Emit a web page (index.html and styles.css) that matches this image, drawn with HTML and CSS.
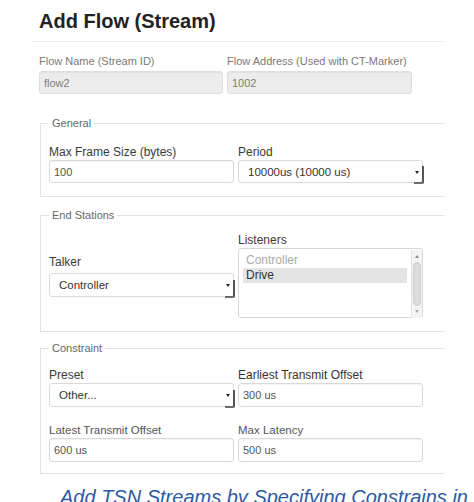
FILE: index.html
```html
<!DOCTYPE html>
<html lang="en">
<head>
<meta charset="utf-8">
<title>Add Flow (Stream)</title>
<link rel="stylesheet" href="styles.css">
</head>
<body>
<div class="page">
  <h1 class="title">Add Flow (Stream)</h1>
  <hr class="rule">
  <div class="row row-top">
    <div class="field">
      <div class="lbl lbl-muted">Flow Name (Stream ID)</div>
      <div class="input input-disabled">flow2</div>
    </div>
    <div class="field">
      <div class="lbl lbl-muted">Flow Address (Used with CT-Marker)</div>
      <div class="input input-disabled">1002</div>
    </div>
  </div>

  <fieldset class="group group-general">
    <legend class="legend">General</legend>
    <div class="grid grid-general">
      <div class="field">
        <div class="lbl">Max Frame Size (bytes)</div>
        <div class="input">100</div>
      </div>
      <div class="field">
        <div class="lbl">Period</div>
        <div class="select select-period"><span class="select-text">10000us (10000 us)</span><i class="caret"></i></div>
      </div>
    </div>
  </fieldset>

  <fieldset class="group group-stations">
    <legend class="legend">End Stations</legend>
    <div class="grid grid-stations">
      <div class="field field-talker">
        <div class="lbl lbl-talker">Talker</div>
        <div class="select"><span class="select-text">Controller</span><i class="caret"></i></div>
      </div>
      <div class="field">
        <div class="lbl">Listeners</div>
        <div class="listbox">
          <div class="options">
            <div class="option option-off">Controller</div>
            <div class="option option-selected">Drive</div>
          </div>
          <div class="scrollbar">
            <div class="sb-btn"><i class="sb-up"></i></div>
            <div class="sb-thumb"></div>
            <div class="sb-btn"><i class="sb-down"></i></div>
          </div>
        </div>
      </div>
    </div>
  </fieldset>

  <fieldset class="group group-constraint">
    <legend class="legend">Constraint</legend>
    <div class="grid grid-constraint">
      <div class="field">
        <div class="lbl">Preset</div>
        <div class="select select-tall"><span class="select-text">Other...</span><i class="caret"></i></div>
      </div>
      <div class="field">
        <div class="lbl lbl-strong">Earliest Transmit Offset</div>
        <div class="input input-tall">300 us</div>
      </div>
      <div class="field">
        <div class="lbl lbl-soft">Latest Transmit Offset</div>
        <div class="input input-tall">600 us</div>
      </div>
      <div class="field">
        <div class="lbl lbl-soft">Max Latency</div>
        <div class="input input-tall">500 us</div>
      </div>
    </div>
  </fieldset>
</div>
<p class="caption">Add TSN Streams by Specifying Constrains in</p>
</body>
</html>
```

FILE: styles.css
```css
html, body {
  margin: 0;
  padding: 0;
  background: #ffffff;
}

body {
  font-family: "Liberation Sans", Arial, Helvetica, sans-serif;
  color: #333;
  width: 474px;
  height: 502px;
  overflow: hidden;
}

.page {
  margin-left: 32px;
  width: 413px;
}

.title {
  margin: 0;
  padding: 9px 0 0 7px;
  font-size: 20px;
  line-height: 24px;
  font-weight: bold;
  color: #222;
}

.rule {
  margin: 8px 0 0 0;
  border: 0;
  height: 1px;
  background: #eeeeee;
}

.row-top {
  display: grid;
  grid-template-columns: 184px 185px;
  column-gap: 4px;
  margin: 13px 0 0 7px;
}

.field {
  display: flex;
  flex-direction: column;
  min-width: 0;
}

.lbl {
  font-size: 12px;
  line-height: 14px;
  margin-bottom: 1px;
  color: #3a3a3a;
  white-space: nowrap;
}

.lbl-muted {
  font-size: 11px;
  line-height: 13px;
  margin-bottom: 3px;
  color: #7a7a7a;
}

.lbl-strong {
  color: #333;
}

.lbl-soft {
  font-size: 11.5px;
  color: #555;
}

.input {
  box-sizing: border-box;
  height: 23px;
  border: 1px solid #d9d9d9;
  border-radius: 3px;
  background: #fff;
  box-shadow: inset 0 1px 1px rgba(0, 0, 0, 0.05);
  padding: 0 4px;
  display: flex;
  align-items: center;
  font-size: 11px;
  color: #555;
  white-space: nowrap;
}

.input-disabled {
  background: #ececec;
  border-color: #dedede;
  color: #7d7d7d;
}

.input-tall {
  height: 24px;
}

.select {
  position: relative;
  box-sizing: border-box;
  height: 24px;
  border: 1px solid #dadada;
  border-radius: 3px;
  background: #fff;
  padding: 0 9px;
  display: flex;
  align-items: center;
  font-size: 11.5px;
  color: #333;
  white-space: nowrap;
}

.select-period {
  height: 23px;
}

.select-text {
  flex: 1;
}

.caret {
  position: absolute;
  right: 3px;
  top: 50%;
  margin-top: -1px;
  width: 0;
  height: 0;
  border-left: 2px solid transparent;
  border-right: 2px solid transparent;
  border-top: 3px solid #222;
}

.select::after {
  content: "";
  position: absolute;
  right: -2px;
  bottom: -2px;
  width: 8px;
  height: 16px;
  border-right: 2px solid #3a3a3a;
  border-bottom: 2px solid #555;
  border-bottom-right-radius: 2px;
  opacity: 0.85;
}

.group {
  margin: 0 0 0 8px;
  padding: 0 21px 13px 8px;
  border: 1px solid #e3e3e3;
  border-right-color: transparent;
  min-width: 0;
}

.legend {
  padding: 0 3px;
  font-size: 11px;
  line-height: 13px;
  color: #666;
}

.group-general {
  margin-top: 23px;
}

.group-stations {
  margin-top: 12px;
}

.group-constraint {
  margin-top: 10px;
  padding-bottom: 11px;
}

.grid {
  display: grid;
  grid-template-columns: 185px 185px;
  column-gap: 4px;
}

.grid-general {
  margin-top: 15px;
}

.grid-stations {
  margin-top: 11px;
  align-items: start;
}

.grid-constraint {
  margin-top: 13px;
  row-gap: 16px;
}

.field-talker {
  margin-top: 22px;
}

.lbl-talker {
  margin-bottom: 4px;
}

.listbox {
  box-sizing: border-box;
  height: 70px;
  border: 1px solid #d6d6d6;
  border-radius: 3px;
  background: #fff;
  display: flex;
  padding: 4px 0 0 4px;
}

.options {
  flex: 1;
  display: flex;
  flex-direction: column;
}

.option {
  height: 15px;
  line-height: 15px;
  padding-left: 3px;
  font-size: 12px;
  color: #333;
}

.option-off {
  color: #ababab;
}

.option-selected {
  background: #e4e4e4;
}

.scrollbar {
  box-sizing: border-box;
  width: 11px;
  margin: -3px 0 0 4px;
  height: 68px;
  border-left: 1px solid #e2e2e2;
  background: #f4f4f4;
  display: flex;
  flex-direction: column;
  padding: 2px 1px;
}

.sb-btn {
  height: 9px;
  display: flex;
  align-items: center;
  justify-content: center;
}

.sb-up {
  width: 0;
  height: 0;
  border-left: 2px solid transparent;
  border-right: 2px solid transparent;
  border-bottom: 3px solid #888;
}

.sb-down {
  width: 0;
  height: 0;
  border-left: 2px solid transparent;
  border-right: 2px solid transparent;
  border-top: 3px solid #aaa;
}

.sb-thumb {
  flex: 1;
  margin: 1px 0;
  background: #dcdcdc;
  border: 1px solid #cfcfcf;
  border-radius: 4px;
}

.caption {
  margin: 11px 0 0 0;
  padding-left: 60px;
  font-size: 20px;
  line-height: 24px;
  font-style: italic;
  color: #2c5aa5;
  white-space: nowrap;
}
```
